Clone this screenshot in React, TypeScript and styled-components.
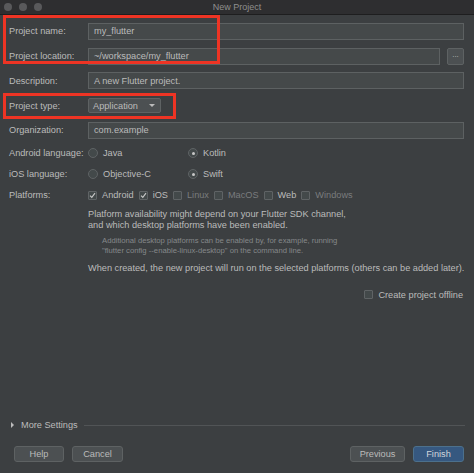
import React from "react";
import styled, { createGlobalStyle } from "styled-components";

const Global = createGlobalStyle`
  html, body { margin: 0; padding: 0; background: #3c3f41; }
  body { font-family: "Liberation Sans", Arial, sans-serif; -webkit-font-smoothing: antialiased; }
  * { box-sizing: border-box; }
`;

const Window = styled.div`
  width: 474px;
  height: 473px;
  background: #3c3f41;
  display: flex;
  flex-direction: column;
  position: relative;
  overflow: hidden;
  color: #bbbbbb;
  font-size: 9.2px;
`;

const TitleBar = styled.div`
  height: 15px;
  flex: none;
  background: #2e2e30;
  border-bottom: 1px solid #1e1e1f;
  display: flex;
  align-items: center;
  position: relative;
  padding-left: 4px;
  gap: 7px;
`;

const Light = styled.span`
  width: 8px;
  height: 8px;
  border-radius: 50%;
  background: #59595b;
`;

const Title = styled.div`
  position: absolute;
  left: 0;
  right: 0;
  text-align: center;
  color: #8e8e8e;
  font-size: 9px;
  pointer-events: none;
`;

const Form = styled.div`
  padding: 4px 10px 0 9px;
  display: flex;
  flex-direction: column;
  position: relative;
`;

const Row = styled.div<{ $h: number }>`
  height: ${(p) => p.$h}px;
  display: flex;
  align-items: center;
`;

const Label = styled.div`
  width: 79px;
  flex: none;
  white-space: nowrap;
`;

const Field = styled.div`
  flex: 1;
  height: 17px;
  background: #45494a;
  border: 1px solid #5d6162;
  display: flex;
  align-items: center;
  padding-left: 5px;
  color: #bbbbbb;
`;

const Browse = styled.div`
  width: 17px;
  height: 17px;
  margin-left: 7px;
  background: #4c5052;
  border: 1px solid #5e6263;
  border-radius: 2px;
  display: flex;
  align-items: center;
  justify-content: center;
  color: #bbbbbb;
  font-size: 8px;
  line-height: 1;
  padding-bottom: 2px;
`;

const Dropdown = styled.div`
  width: 73px;
  height: 15px;
  background: #4c5052;
  border: 1px solid #5e6263;
  border-radius: 2px;
  display: flex;
  align-items: center;
  justify-content: space-between;
  padding: 0 5px 0 4px;
`;

const Caret = styled.span`
  width: 0;
  height: 0;
  border-left: 3px solid transparent;
  border-right: 3px solid transparent;
  border-top: 3px solid #bbbbbb;
`;

const Option = styled.label<{ $w?: number; $disabled?: boolean }>`
  display: flex;
  align-items: center;
  gap: 5px;
  ${(p) => (p.$w ? `width: ${p.$w}px;` : "")}
  margin-right: 5px;
  color: ${(p) => (p.$disabled ? "#7a7c7e" : "#bbbbbb")};
  white-space: nowrap;
`;

const Radio = styled.span<{ $on?: boolean }>`
  width: 10px;
  height: 10px;
  border-radius: 50%;
  background: #43494a;
  border: 1px solid #5f6365;
  display: flex;
  align-items: center;
  justify-content: center;
  &::after {
    content: "";
    width: 3px;
    height: 3px;
    border-radius: 50%;
    background: ${(p) => (p.$on ? "#c8c8c8" : "transparent")};
  }
`;

const Box = styled.span`
  width: 9px;
  height: 9px;
  flex: none;
  border: 1px solid #5f6365;
  background: #43494a;
  border-radius: 1px;
  display: flex;
  align-items: center;
  justify-content: center;
`;

const Para = styled.div`
  margin-left: 79px;
  line-height: 11px;
  margin-top: 3px;
  color: #bbbbbb;
`;

const Note = styled.div`
  margin-left: 93px;
  margin-top: 5.5px;
  font-size: 7.7px;
  line-height: 9.5px;
  color: #85888a;
`;

const Wide = styled.div`
  margin-left: 79px;
  margin-top: 8px;
  line-height: 11px;
  white-space: nowrap;
`;

const OfflineRow = styled.div`
  display: flex;
  justify-content: flex-end;
  align-items: center;
  gap: 5px;
  margin-top: 15px;
  padding-right: 1px;
  height: 11px;
`;

const Highlight = styled.div<{ $top: number; $w: number; $h: number }>`
  position: absolute;
  left: 3px;
  top: ${(p) => p.$top}px;
  width: ${(p) => p.$w}px;
  height: ${(p) => p.$h}px;
  border: 3px solid #ee3424;
  pointer-events: none;
`;

const Spacer = styled.div`
  flex: 1;
`;

const More = styled.div`
  display: flex;
  align-items: center;
  padding: 0 9px 0 11px;
  gap: 5px;
  height: 12px;
`;

const Tri = styled.span`
  width: 0;
  height: 0;
  border-top: 3px solid transparent;
  border-bottom: 3px solid transparent;
  border-left: 3.5px solid #bbbbbb;
  margin-right: 2px;
`;

const Line = styled.div`
  flex: 1;
  height: 1px;
  background: #515456;
  margin-left: 1px;
`;

const Footer = styled.div`
  display: flex;
  align-items: center;
  padding: 15px 10px 11px 14px;
  gap: 8px;
`;

const Button = styled.div<{ $primary?: boolean; $w: number }>`
  width: ${(p) => p.$w}px;
  height: 16px;
  border-radius: 3px;
  display: flex;
  align-items: center;
  justify-content: center;
  background: ${(p) => (p.$primary ? "#365880" : "#4c5052")};
  border: 1px solid ${(p) => (p.$primary ? "#4c708c" : "#5e6263")};
  color: ${(p) => (p.$primary ? "#d0d6dc" : "#bbbbbb")};
`;

const Check = () => (
  <svg width="7" height="7" viewBox="0 0 7 7">
    <polyline points="1,3.6 2.8,5.4 6,1.2" fill="none" stroke="#c8c8c8" strokeWidth="1.1" />
  </svg>
);

export default function App() {
  return (
    <>
      <Global />
      <Window>
        <TitleBar>
          <Light />
          <Light />
          <Light />
          <Title>New Project</Title>
        </TitleBar>
        <Form>
          <Row $h={24.75}>
            <Label>Project name:</Label>
            <Field>my_flutter</Field>
          </Row>
          <Row $h={24.75}>
            <Label>Project location:</Label>
            <Field>~/workspace/my_flutter</Field>
            <Browse>...</Browse>
          </Row>
          <Row $h={24.75}>
            <Label>Description:</Label>
            <Field>A new Flutter project.</Field>
          </Row>
          <Row $h={24.75}>
            <Label>Project type:</Label>
            <Dropdown>
              <span>Application</span>
              <Caret />
            </Dropdown>
          </Row>
          <Row $h={24.75}>
            <Label>Organization:</Label>
            <Field>com.example</Field>
          </Row>
          <Row $h={21}>
            <Label>Android language:</Label>
            <Option $w={95}>
              <Radio />
              Java
            </Option>
            <Option>
              <Radio $on />
              Kotlin
            </Option>
          </Row>
          <Row $h={21}>
            <Label>iOS language:</Label>
            <Option $w={95}>
              <Radio />
              Objective-C
            </Option>
            <Option>
              <Radio $on />
              Swift
            </Option>
          </Row>
          <Row $h={21}>
            <Label>Platforms:</Label>
            <Option>
              <Box>
                <Check />
              </Box>
              Android
            </Option>
            <Option>
              <Box>
                <Check />
              </Box>
              iOS
            </Option>
            <Option $disabled>
              <Box />
              Linux
            </Option>
            <Option $disabled>
              <Box />
              MacOS
            </Option>
            <Option>
              <Box />
              Web
            </Option>
            <Option $disabled>
              <Box />
              Windows
            </Option>
          </Row>
          <Para>
            Platform availability might depend on your Flutter SDK channel,
            <br />
            and which desktop platforms have been enabled.
          </Para>
          <Note>
            Additional desktop platforms can be enabled by, for example, running
            <br />
            "flutter config --enable-linux-desktop" on the command line.
          </Note>
          <Wide>
            When created, the new project will run on the selected platforms (others can be added later).
          </Wide>
          <OfflineRow>
            <Box />
            Create project offline
          </OfflineRow>
          <Highlight $top={0} $w={217} $h={49} />
          <Highlight $top={78} $w={173} $h={26} />
        </Form>
        <Spacer />
        <More>
          <Tri />
          More Settings
          <Line />
        </More>
        <Footer>
          <Button $w={50}>Help</Button>
          <Button $w={51}>Cancel</Button>
          <Spacer />
          <Button $w={55}>Previous</Button>
          <Button $w={51} $primary>
            Finish
          </Button>
        </Footer>
      </Window>
    </>
  );
}
